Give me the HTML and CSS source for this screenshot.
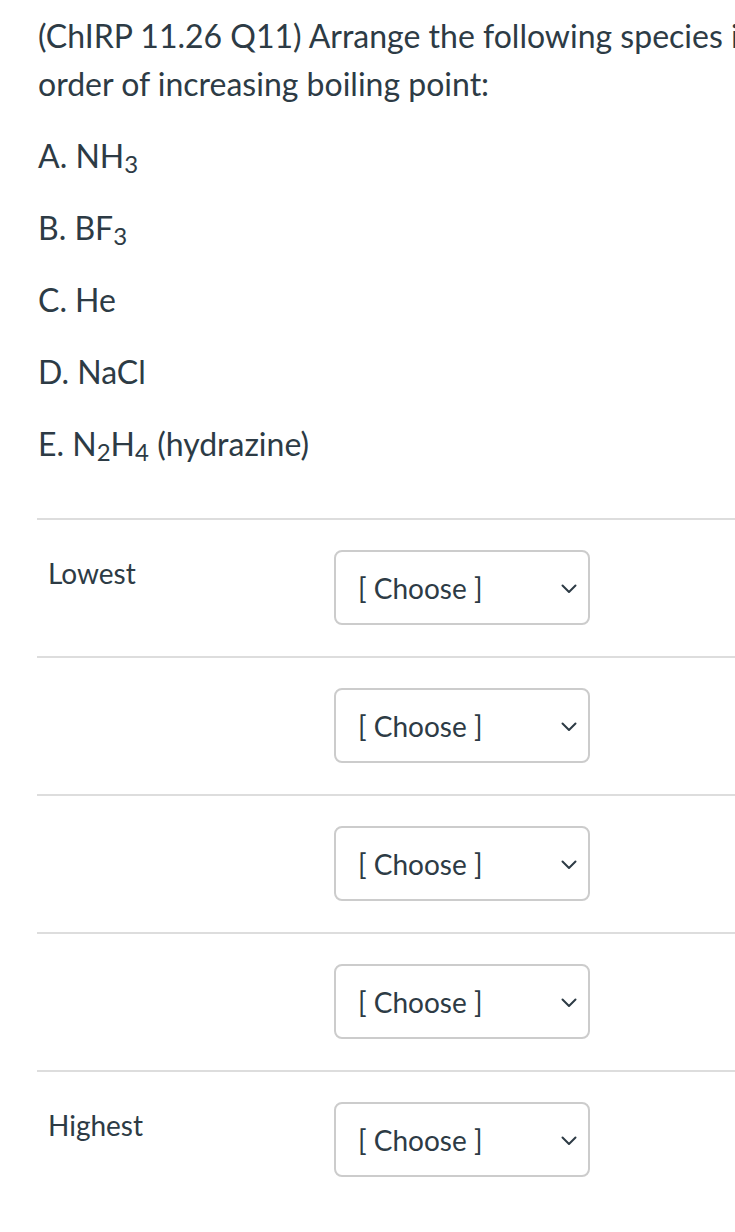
FILE: index.html
```html
<!DOCTYPE html>
<html lang="en">
<head>
<meta charset="utf-8">
<title>Question</title>
<link rel="stylesheet" href="styles.css">
</head>
<body>
<div class="question">
  <p class="title">(ChIRP 11.26 Q11) Arrange the following species in order of increasing boiling point:</p>
  <p class="opt">A. NH<sub>3</sub></p>
  <p class="opt">B. BF<sub>3</sub></p>
  <p class="opt">C. He</p>
  <p class="opt">D. NaCl</p>
  <p class="opt">E. N<sub>2</sub>H<sub>4</sub> (hydrazine)</p>

  <div class="answers">
    <div class="row">
      <div class="label">Lowest</div>
      <div class="select"><span>[ Choose ]</span><svg class="chev" width="16" height="10" viewBox="0 0 16 10"><path d="M1.5 1.5 L8 8 L14.5 1.5" fill="none" stroke="#2d3b45" stroke-width="2" stroke-linecap="round" stroke-linejoin="round"/></svg></div>
    </div>
    <div class="row">
      <div class="label"></div>
      <div class="select"><span>[ Choose ]</span><svg class="chev" width="16" height="10" viewBox="0 0 16 10"><path d="M1.5 1.5 L8 8 L14.5 1.5" fill="none" stroke="#2d3b45" stroke-width="2" stroke-linecap="round" stroke-linejoin="round"/></svg></div>
    </div>
    <div class="row">
      <div class="label"></div>
      <div class="select"><span>[ Choose ]</span><svg class="chev" width="16" height="10" viewBox="0 0 16 10"><path d="M1.5 1.5 L8 8 L14.5 1.5" fill="none" stroke="#2d3b45" stroke-width="2" stroke-linecap="round" stroke-linejoin="round"/></svg></div>
    </div>
    <div class="row">
      <div class="label"></div>
      <div class="select"><span>[ Choose ]</span><svg class="chev" width="16" height="10" viewBox="0 0 16 10"><path d="M1.5 1.5 L8 8 L14.5 1.5" fill="none" stroke="#2d3b45" stroke-width="2" stroke-linecap="round" stroke-linejoin="round"/></svg></div>
    </div>
    <div class="row">
      <div class="label">Highest</div>
      <div class="select"><span>[ Choose ]</span><svg class="chev" width="16" height="10" viewBox="0 0 16 10"><path d="M1.5 1.5 L8 8 L14.5 1.5" fill="none" stroke="#2d3b45" stroke-width="2" stroke-linecap="round" stroke-linejoin="round"/></svg></div>
    </div>
  </div>
</div>
</body>
</html>
```
FILE: styles.css
```css
html, body {
  margin: 0;
  padding: 0;
  background: #ffffff;
  overflow: hidden;
}
body {
  font-family: Lato, "Liberation Sans", sans-serif;
  color: #2d3b45;
}
.question {
  width: 760px;
  padding: 12px 0 0 37px;
}
p {
  margin: 0 0 24px 0;
  font-size: 32px;
  line-height: 48px;
  padding-left: 1px;
}
sub {
  font-size: 0.75em;
  vertical-align: -0.2em;
  line-height: 0;
}
.answers {
  margin-top: 50px;
}
.row {
  display: flex;
  border-top: 2px solid #dddddd;
  padding: 30px 0 31px;
}
.label {
  width: 286px;
  padding-left: 11px;
  font-size: 28px;
  line-height: 34px;
  margin-top: 6px;
}
.select {
  box-sizing: border-box;
  width: 256px;
  height: 75px;
  border: 2px solid #cccccc;
  border-radius: 8px;
  display: flex;
  align-items: center;
  justify-content: space-between;
  padding: 0 11px 0 22px;
  font-size: 28px;
}
.chev {
  display: block;
  margin-top: 2px;
}
```
